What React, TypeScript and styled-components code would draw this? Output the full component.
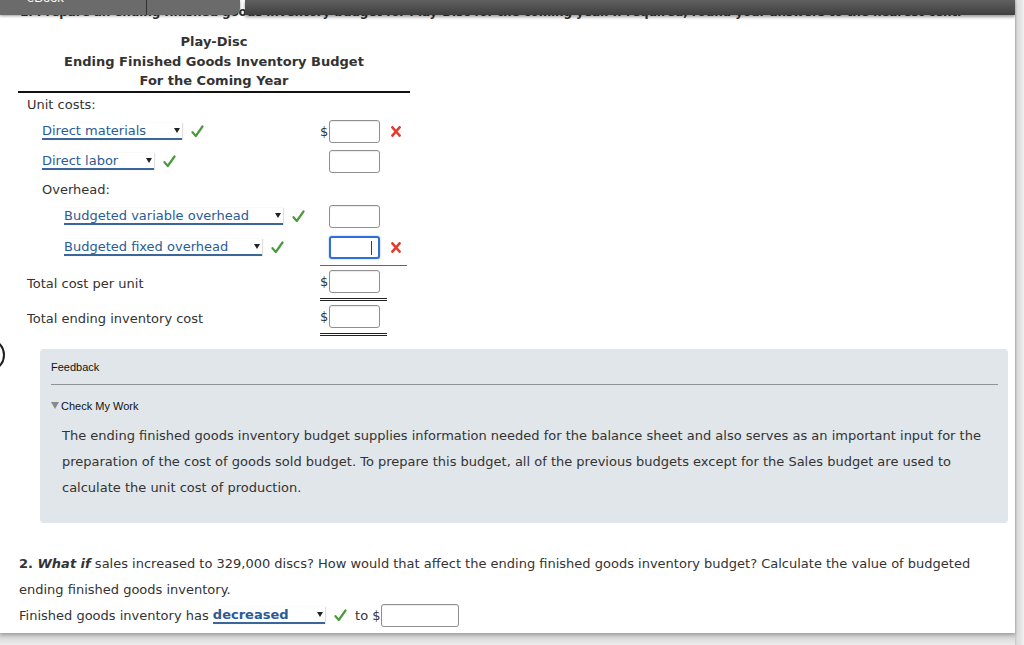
import React from 'react'
import styled, { createGlobalStyle } from 'styled-components'

const GlobalStyle = createGlobalStyle`
  body {
    margin: 0;
    background: #e6e6e6;
    font-family: "DejaVu Sans", Verdana, sans-serif;
    color: #333;
  }
`

const Shell = styled.div`
  display: flex;
  width: 1024px;
  height: 645px;
  overflow: hidden;
`

const Column = styled.div`
  width: 1015px;
  display: flex;
  flex-direction: column;
`

const Card = styled.div`
  position: relative;
  height: 633px;
  background: #fff;
  overflow: hidden;
  box-shadow: 0 2px 4px rgba(0, 0, 0, 0.25);
`

const BottomShade = styled.div`
  flex: 1;
  background: linear-gradient(#cfcfcf, #ececec);
`

const ScrollStrip = styled.div`
  width: 9px;
  background: linear-gradient(90deg, #c4c4c4 0, #dedede 2px, #e4e4e4 6px, #f2f2f2 100%);
`

const TopBar = styled.div`
  position: absolute;
  top: 0;
  left: 0;
  right: 0;
  height: 15px;
  display: flex;
  z-index: 2;
`

const Tab = styled.div`
  display: flex;
  width: 240px;
  background: #6b6b6b;
  border-bottom-right-radius: 7px;
  box-shadow: 0 1px 3px rgba(0, 0, 0, 0.4);
  overflow: hidden;
`

const TabItem = styled.div<{ $w: number; $divider?: boolean }>`
  width: ${p => p.$w}px;
  border-right: ${p => (p.$divider ? '1px solid #333' : 'none')};
  color: #fff;
  font-family: "Liberation Sans", Arial, sans-serif;
  font-size: 13px;
  line-height: 12px;
  padding-left: 27px;
  margin-top: -8px;
  box-sizing: border-box;
`

const BarRest = styled.div`
  flex: 1;
  margin-left: 5px;
  background: linear-gradient(#606060, #3f3f3f);
  box-shadow: 0 2px 3px rgba(0, 0, 0, 0.4);
`

const Ring = styled.div`
  position: absolute;
  left: -29px;
  top: 338px;
  width: 30px;
  height: 30px;
  border: 2.5px solid #1e1e1e;
  border-radius: 50%;
`

const Lead = styled.div`
  padding: 4px 0 0 20px;
  font-size: 12px;
  letter-spacing: -0.1px;
  font-weight: bold;
  line-height: 16px;
  white-space: nowrap;
`

const Statement = styled.div`
  margin: 12px 0 0 18px;
  width: 392px;
`

const Heading = styled.div`
  text-align: center;
  font-weight: bold;
  font-size: 13px;
  line-height: 19.5px;
  border-bottom: 2px solid #111;
`

const Row = styled.div<{ $h: number }>`
  display: flex;
  align-items: center;
  height: ${p => p.$h}px;
`

const Label = styled.div<{ $indent: number }>`
  width: 302px;
  box-sizing: border-box;
  padding-left: ${p => p.$indent}px;
  font-size: 13px;
  display: flex;
  align-items: center;
  white-space: nowrap;
`

const Figures = styled.div<{ $rule?: boolean }>`
  display: flex;
  align-self: stretch;
  width: 87px;
  box-sizing: border-box;
  border-bottom: ${p => (p.$rule ? '1px solid #666' : 'none')};
`

const Money = styled.div<{ $double?: boolean }>`
  display: flex;
  align-items: center;
  width: 67px;
  box-sizing: border-box;
  border-bottom: ${p => (p.$double ? '3px double #222' : 'none')};
`

const Dollar = styled.span`
  width: 9px;
  font-size: 13px;
  text-align: left;
`

const Field = styled.div<{ $w?: number; $focus?: boolean }>`
  position: relative;
  width: ${p => p.$w ?? 51}px;
  height: 23px;
  box-sizing: border-box;
  border: ${p => (p.$focus ? '2px solid #2f6fd6' : '1px solid #8f8f8f')};
  border-radius: 3px;
  background: #fff;
  box-shadow: ${p => (p.$focus ? '0 0 2px rgba(47,111,214,0.5)' : 'inset 0 1px 1px rgba(0,0,0,0.08)')};
`

const Caret = styled.span`
  position: absolute;
  right: 6px;
  top: 3px;
  width: 1px;
  height: 14px;
  background: #1d3f7a;
`

const MarkCell = styled.div`
  display: flex;
  align-items: center;
  width: 20px;
  padding-left: 4px;
  box-sizing: border-box;
`

const Picker = styled.span<{ $w: number; $bold?: boolean }>`
  display: inline-flex;
  align-items: center;
  justify-content: space-between;
  width: ${p => p.$w}px;
  height: 17px;
  box-sizing: border-box;
  padding: 0 2px 0 0;
  background: #fff;
  border-bottom: 2px solid #3a6699;
  box-shadow: 1px 0 1px rgba(0, 0, 0, 0.12);
  color: #2a5b97;
  font-size: 13px;
  font-weight: ${p => (p.$bold ? 'bold' : 'normal')};
  line-height: 15px;
`

const Caretdown = styled.span`
  width: 0;
  height: 0;
  border-left: 3.5px solid transparent;
  border-right: 3.5px solid transparent;
  border-top: 5px solid #222;
`

const Tick = styled.svg`
  margin-left: 9px;
  flex: none;
`

const Feedback = styled.div`
  margin: 13px 0 0 40px;
  width: 968px;
  box-sizing: border-box;
  padding: 9px 10px 22px 11px;
  background: #e1e6ea;
  border-radius: 4px;
`

const FeedbackHead = styled.div`
  font-family: "Liberation Sans", Arial, sans-serif;
  font-size: 11px;
  line-height: 18px;
  color: #111;
  padding-bottom: 8px;
  border-bottom: 1px solid #8d9398;
`

const Toggle = styled.div`
  display: flex;
  align-items: center;
  gap: 2px;
  margin-top: 14px;
  font-family: "Liberation Sans", Arial, sans-serif;
  font-size: 11px;
  line-height: 14px;
  color: #111;
`

const ToggleArrow = styled.span`
  width: 0;
  height: 0;
  border-left: 4px solid transparent;
  border-right: 4px solid transparent;
  border-top: 7px solid #8a8a8a;
`

const Explain = styled.p`
  margin: 10px 0 0 11px;
  font-size: 13px;
  line-height: 26px;
`

const Second = styled.div`
  margin: 28px 0 0 19px;
  font-size: 13px;
  line-height: 26px;
`

const Strong = styled.span`
  font-weight: bold;
`

const AnswerLine = styled.div`
  display: flex;
  align-items: center;
  height: 26px;
  white-space: pre;
`

const Check = () => (
  <Tick width="13" height="13" viewBox="0 0 13 13">
    <path d="M1.5 7.2 L4.8 11 L11.5 1.5" fill="none" stroke="#4b9a3e" strokeWidth="2.2" strokeLinecap="round" strokeLinejoin="round" />
  </Tick>
)

const Cross = () => (
  <svg width="10" height="11" viewBox="0 0 10 11">
    <path d="M1.5 1.5 L8.5 9.5 M8.5 1.5 L1.5 9.5" stroke="#e63a2e" strokeWidth="2.6" strokeLinecap="square" />
  </svg>
)

const Select = ({ text, w, bold }: { text: string; w: number; bold?: boolean }) => (
  <Picker $w={w} $bold={bold}>
    <span>{text}</span>
    <Caretdown />
  </Picker>
)

type Line = {
  label: React.ReactNode
  indent: number
  h: number
  dollar?: boolean
  field?: boolean
  focus?: boolean
  wrong?: boolean
  rule?: boolean
  double?: boolean
}

const lines: Line[] = [
  { label: 'Unit costs:', indent: 9, h: 24 },
  { label: <><Select text="Direct materials" w={140} /><Check /></>, indent: 24, h: 30, dollar: true, field: true, wrong: true },
  { label: <><Select text="Direct labor" w={112} /><Check /></>, indent: 24, h: 30, field: true },
  { label: 'Overhead:', indent: 24, h: 26 },
  { label: <><Select text="Budgeted variable overhead" w={219} /><Check /></>, indent: 46, h: 27, field: true },
  { label: <><Select text="Budgeted fixed overhead" w={198} /><Check /></>, indent: 46, h: 36, field: true, focus: true, wrong: true, rule: true },
  { label: 'Total cost per unit', indent: 9, h: 35, dollar: true, field: true, double: true },
  { label: 'Total ending inventory cost', indent: 9, h: 35, dollar: true, field: true, double: true },
]

export default function App() {
  return (
    <>
      <GlobalStyle />
      <Shell>
        <Column>
          <Card>
            <TopBar>
              <Tab>
                <TabItem $w={147} $divider>eBook</TabItem>
                <TabItem $w={93} />
              </Tab>
              <BarRest />
            </TopBar>
            <Ring />

            <Lead>
              1. Prepare an ending finished goods inventory budget for Play-Disc for the coming year. If required, round your answers to the nearest cent.
            </Lead>

            <Statement>
              <Heading>
                Play-Disc
                <br />
                Ending Finished Goods Inventory Budget
                <br />
                For the Coming Year
              </Heading>
              {lines.map((l, i) => (
                <Row key={i} $h={l.h}>
                  <Label $indent={l.indent}>{l.label}</Label>
                  {l.field && (
                    <Figures $rule={l.rule}>
                      <Money $double={l.double}>
                        <Dollar>{l.dollar ? '$' : ''}</Dollar>
                        <Field $focus={l.focus}>{l.focus && <Caret />}</Field>
                      </Money>
                      <MarkCell>{l.wrong && <Cross />}</MarkCell>
                    </Figures>
                  )}
                </Row>
              ))}
            </Statement>

            <Feedback>
              <FeedbackHead>Feedback</FeedbackHead>
              <Toggle>
                <ToggleArrow />
                Check My Work
              </Toggle>
              <Explain>
                The ending finished goods inventory budget supplies information needed for the balance sheet and also serves as an important input for the preparation of the cost of goods sold budget. To prepare this budget, all of the previous budgets except for the Sales budget are used to calculate the unit cost of production.
              </Explain>
            </Feedback>

            <Second>
              <div>
                <Strong>2. <i>What if</i></Strong> sales increased to 329,000 discs? How would that affect the ending finished goods inventory budget? Calculate the value of budgeted ending finished goods inventory.
              </div>
              <AnswerLine>
                Finished goods inventory has <Select text="decreased" w={112} bold />
                <Check />
                <span>  to $</span>
                <Field $w={78} />
              </AnswerLine>
            </Second>
          </Card>
          <BottomShade />
        </Column>
        <ScrollStrip />
      </Shell>
    </>
  )
}
